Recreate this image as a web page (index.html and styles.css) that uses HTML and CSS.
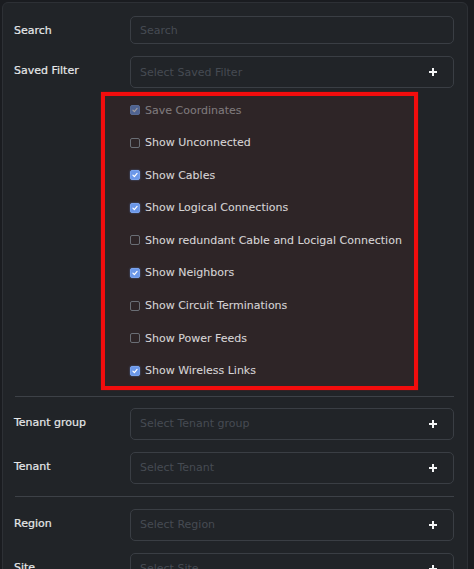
FILE: index.html
```html
<!DOCTYPE html>
<html lang="en">
<head>
<meta charset="utf-8">
<title>Filters</title>
<link rel="stylesheet" href="styles.css">
</head>
<body>
<div class="card">
  <div class="row">
    <div class="label">Search</div>
    <div class="field field-search"><span class="ph">Search</span></div>
  </div>
  <div class="row">
    <div class="label">Saved Filter</div>
    <div class="field field-select"><span class="ph">Select Saved Filter</span><svg class="plus" viewBox="0 0 8 8"><rect x="3" y="0" width="2" height="8"/><rect x="0" y="3" width="8" height="2"/></svg></div>
  </div>

  <div class="options">
    <div class="opt disabled"><span class="cb on"><svg viewBox="0 0 10 10"><path d="M2.4 5.2 L4.2 7 L7.6 3.1"/></svg></span><span class="txt">Save Coordinates</span></div>
    <div class="opt"><span class="cb"></span><span class="txt">Show Unconnected</span></div>
    <div class="opt"><span class="cb on"><svg viewBox="0 0 10 10"><path d="M2.4 5.2 L4.2 7 L7.6 3.1"/></svg></span><span class="txt">Show Cables</span></div>
    <div class="opt"><span class="cb on"><svg viewBox="0 0 10 10"><path d="M2.4 5.2 L4.2 7 L7.6 3.1"/></svg></span><span class="txt">Show Logical Connections</span></div>
    <div class="opt"><span class="cb"></span><span class="txt">Show redundant Cable and Locigal Connection</span></div>
    <div class="opt"><span class="cb on"><svg viewBox="0 0 10 10"><path d="M2.4 5.2 L4.2 7 L7.6 3.1"/></svg></span><span class="txt">Show Neighbors</span></div>
    <div class="opt"><span class="cb"></span><span class="txt">Show Circuit Terminations</span></div>
    <div class="opt"><span class="cb"></span><span class="txt">Show Power Feeds</span></div>
    <div class="opt"><span class="cb on"><svg viewBox="0 0 10 10"><path d="M2.4 5.2 L4.2 7 L7.6 3.1"/></svg></span><span class="txt">Show Wireless Links</span></div>
  </div>

  <hr class="sep sep-first">

  <div class="row">
    <div class="label">Tenant group</div>
    <div class="field field-select"><span class="ph">Select Tenant group</span><svg class="plus" viewBox="0 0 8 8"><rect x="3" y="0" width="2" height="8"/><rect x="0" y="3" width="8" height="2"/></svg></div>
  </div>
  <div class="row">
    <div class="label">Tenant</div>
    <div class="field field-select"><span class="ph">Select Tenant</span><svg class="plus" viewBox="0 0 8 8"><rect x="3" y="0" width="2" height="8"/><rect x="0" y="3" width="8" height="2"/></svg></div>
  </div>

  <hr class="sep sep-second">

  <div class="row">
    <div class="label">Region</div>
    <div class="field field-select"><span class="ph">Select Region</span><svg class="plus" viewBox="0 0 8 8"><rect x="3" y="0" width="2" height="8"/><rect x="0" y="3" width="8" height="2"/></svg></div>
  </div>
  <div class="row">
    <div class="label">Site</div>
    <div class="field field-select"><span class="ph">Select Site</span><svg class="plus" viewBox="0 0 8 8"><rect x="3" y="0" width="2" height="8"/><rect x="0" y="3" width="8" height="2"/></svg></div>
  </div>
</div>
</body>
</html>
```

FILE: styles.css
```css
html, body {
  margin: 0;
  padding: 0;
  height: 100%;
  overflow: hidden;
}

body {
  background: #1a1c20;
  font-family: "DejaVu Sans", Verdana, sans-serif;
  font-size: 11px;
  padding: 2px 6px 0 2px;
  box-sizing: border-box;
}

.card {
  background: #212428;
  border: 1px solid #2d3035;
  border-radius: 6px;
  padding: 13px 13px 0 11px;
  min-height: 600px;
  box-sizing: border-box;
}

.row {
  display: grid;
  grid-template-columns: 116px 1fr;
  align-items: start;
  margin-bottom: 12px;
}

.label {
  color: #e6e8ea;
  line-height: 16px;
  padding-top: 7px;
  -webkit-text-stroke: 0.2px #e6e8ea;
}

.field {
  border: 1px solid #3a3e44;
  border-radius: 5px;
  background: #212428;
  box-sizing: border-box;
  display: flex;
  align-items: center;
  justify-content: space-between;
  padding: 0 16px 0 9px;
}

.field-search {
  height: 28px;
}

.field-select {
  height: 32px;
}

.ph {
  color: #464b53;
}

.plus {
  width: 8px;
  height: 8px;
  fill: #f4f5f6;
}

.options {
  margin: -8px 0 0 87px;
  width: 317px;
  box-sizing: border-box;
  border: 4px solid #f20d0d;
  background: #2e2527;
  padding: 6px 0 7px 25px;
  display: flex;
  flex-direction: column;
  gap: 16.6px;
  box-shadow: 0 0 1px rgba(255, 0, 0, 0.6);
}

.opt {
  height: 16px;
  display: flex;
  align-items: center;
  gap: 5px;
}

.txt {
  color: #d6d4d5;
  white-space: nowrap;
  -webkit-text-stroke: 0.1px #d6d4d5;
}

.cb {
  width: 10px;
  height: 10px;
  box-sizing: border-box;
  border: 1px solid #6a6e75;
  border-radius: 2px;
  flex: none;
  display: flex;
}

.cb.on {
  background: #6b97e8;
  border-color: #7aa3ee;
  box-shadow: 0 0 2px rgba(107, 151, 232, 0.6);
}

.cb svg {
  width: 100%;
  height: 100%;
  fill: none;
  stroke: #ffffff;
  stroke-width: 1.5;
  stroke-linecap: round;
  stroke-linejoin: round;
}

.opt.disabled .cb {
  opacity: 0.55;
  box-shadow: none;
}

.opt.disabled .txt {
  color: #7f7a7c;
  -webkit-text-stroke: 0.1px #7f7a7c;
}

.sep {
  border: 0;
  border-top: 1px solid #3d4147;
  height: 0;
}

.sep-first {
  margin: 6px 0 11px 1px;
}

.sep-second {
  margin: 1px 0 12px 1px;
}
```
